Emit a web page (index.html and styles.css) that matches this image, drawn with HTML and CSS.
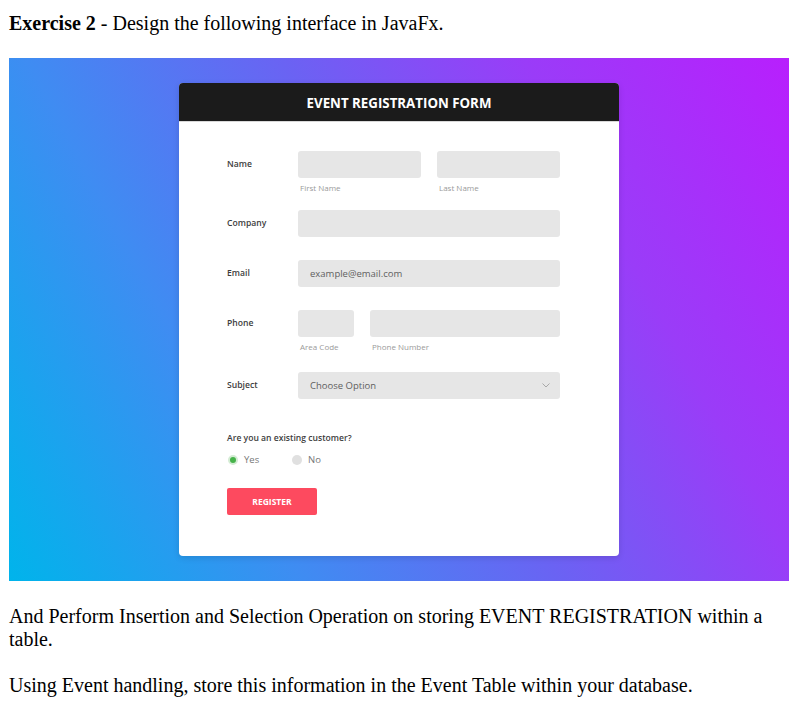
FILE: index.html
```html
<!DOCTYPE html>
<html>
<head>
<meta charset="utf-8">
<link rel="stylesheet" href="styles.css">
</head>
<body>
<p class="intro"><b>Exercise 2</b> - Design the following interface in JavaFx.</p>
<div class="canvas">
  <div class="card">
    <div class="card-head">EVENT REGISTRATION FORM</div>
    <div class="card-body">
      <div class="row row-name">
        <div class="label">Name</div>
        <div class="fields">
          <div class="field w123"><div class="input"></div><div class="sub">First Name</div></div>
          <div class="field w123"><div class="input"></div><div class="sub">Last Name</div></div>
        </div>
      </div>
      <div class="row row-company">
        <div class="label">Company</div>
        <div class="fields"><div class="field wfull"><div class="input"></div></div></div>
      </div>
      <div class="row row-email">
        <div class="label">Email</div>
        <div class="fields"><div class="field wfull"><div class="input"><span class="ph">example@email.com</span></div></div></div>
      </div>
      <div class="row row-phone">
        <div class="label">Phone</div>
        <div class="fields">
          <div class="field w56"><div class="input"></div><div class="sub">Area Code</div></div>
          <div class="field w190"><div class="input"></div><div class="sub">Phone Number</div></div>
        </div>
      </div>
      <div class="row row-subject">
        <div class="label">Subject</div>
        <div class="fields"><div class="field wfull"><div class="input select"><span class="ph">Choose Option</span>
          <svg class="chev" width="8" height="5" viewBox="0 0 8 5"><polyline points="0.5,0.5 4,4 7.5,0.5" fill="none" stroke="#a8a8a8" stroke-width="1"/></svg>
        </div></div></div>
      </div>
      <div class="question">Are you an existing customer?</div>
      <div class="radios">
        <div class="radio"><span class="dot on"></span><span>Yes</span></div>
        <div class="radio"><span class="dot"></span><span>No</span></div>
      </div>
      <div class="btn">REGISTER</div>
    </div>
  </div>
</div>
<p class="para">And Perform Insertion and Selection Operation on storing EVENT REGISTRATION within a table.</p>
<p class="para">Using Event handling, store this information in the Event Table within your database.</p>
</body>
</html>
```
FILE: styles.css
```css
html, body { margin: 0; padding: 0; background: #fff; }
body { padding-left: 9px; font-family: "Liberation Serif", "Times New Roman", serif; color: #000; }
.intro { margin: 0; padding-top: 12px; font-size: 20px; line-height: 23px; }
.intro b { font-weight: bold; }
.canvas {
  margin-top: 23px;
  width: 780px; height: 523px;
  box-sizing: border-box;
  padding: 25px 0 0 170px;
  background: linear-gradient(62deg, #00b4eb 0%, #3f8cf2 28%, #6a63f3 52%, #9a3cf8 75%, #b81ffd 100%);
}
.card {
  width: 440px; height: 473px;
  background: #fff;
  border-radius: 4px;
  box-shadow: 0 2px 6px rgba(0,0,0,0.12);
  font-family: "Open Sans", "Noto Sans", sans-serif;
}
.card-head {
  height: 39px;
  background: #1b1b1b;
  border-radius: 4px 4px 0 0;
  color: #fff;
  font-weight: 700;
  font-size: 13.3px;
  line-height: 40px;
  text-align: center;
  border-bottom: 1px solid #d8d8d8;
  box-sizing: border-box;
}
.card-body { padding: 29px 59px 0 48px; }
.row { display: flex; align-items: flex-start; }
.label { width: 71px; font-size: 8.6px; font-weight: 600; color: #3d3d3d; line-height: 27px; }
.fields { display: flex; gap: 16px; }
.input { height: 27px; background: #e6e6e6; border-radius: 3px; display: flex; align-items: center; padding-left: 12px; box-sizing: border-box; }
.w123 { width: 123px; }
.w56 { width: 56px; }
.w190 { width: 190px; }
.wfull { width: 262px; }
.sub { font-size: 8px; color: #9a9a9a; line-height: 14px; margin-top: 3px; padding-left: 2px; }
.ph { font-size: 9.5px; color: #5f5f5f; }
.select { position: relative; }
.chev { position: absolute; right: 10px; top: 11px; }
.row-name { margin-bottom: 15px; }
.row-company { margin-bottom: 23px; }
.row-email { margin-bottom: 23px; }
.row-phone { margin-bottom: 18px; }
.question { margin-top: 32px; font-size: 8.6px; font-weight: 600; color: #3d3d3d; line-height: 14px; }
.radios { display: flex; margin-top: 8px; line-height: 14px; font-size: 9.5px; color: #777; }
.radio { display: flex; align-items: center; gap: 6px; width: 64px; }
.dot { width: 10px; height: 10px; border-radius: 50%; background: #e0e0e0; margin-left: 1px; box-sizing: border-box; }
.dot.on { background: #46b34a; border: 2px solid #d4ecd4; }
.btn {
  margin-top: 21px;
  width: 90px; height: 27px;
  background: #fd4a5f;
  border-radius: 2px;
  color: #fff;
  font-size: 8.5px; font-weight: 700;
  line-height: 28px;
  text-align: center;
}
.para { margin: 0; font-size: 20px; line-height: 23px; }
.canvas + .para { margin-top: 24px; }
.para + .para { margin-top: 23px; }
```
